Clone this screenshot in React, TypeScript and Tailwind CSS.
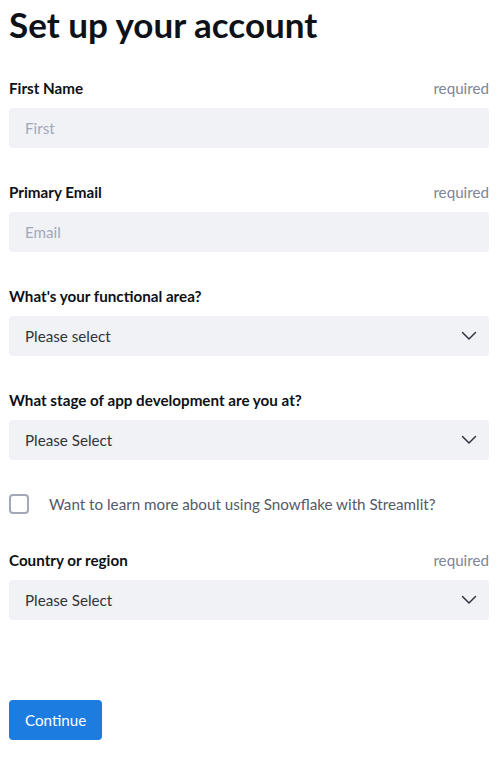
type FieldProps = {
  label: string;
  required?: boolean;
  children: React.ReactNode;
};

const Field = ({ label, required, children }: FieldProps) => (
  <div className="flex flex-col gap-2">
    <div className="flex h-6 items-center justify-between">
      <span className="text-[15.2px] font-bold text-[#0e1117]">{label}</span>
      {required && <span className="text-[15.2px] text-[#808495]">required</span>}
    </div>
    {children}
  </div>
);

const TextInput = ({ placeholder }: { placeholder: string }) => (
  <input
    className="h-10 w-full rounded bg-[#f0f2f6] px-4 text-[15.2px] text-[#31333f] outline-none placeholder:text-[#a3a8b8]"
    placeholder={placeholder}
  />
);

const Select = ({ value }: { value: string }) => (
  <div className="flex h-10 w-full items-center justify-between rounded bg-[#f0f2f6] pl-4 pr-[12px]">
    <span className="text-[15.2px] text-[#31333f]">{value}</span>
    {/* chevron */}
    <svg width="16" height="10" viewBox="0 0 16 10" fill="none" className="text-[#31333f]">
      <path d="M1.5 1.5 L8 8 L14.5 1.5" stroke="currentColor" strokeWidth="1.5" strokeLinecap="round" strokeLinejoin="round" />
    </svg>
  </div>
);

const App = () => {
  return (
    <div className="min-h-screen bg-white pl-[9px] pr-[15px] font-['Lato',sans-serif]">
      <h1 className="h-[52px] text-[35px] font-bold leading-[48px] text-[#0e1117]">Set up your account</h1>
      <div className="mt-6 flex flex-col gap-8">
        <Field label="First Name" required>
          <TextInput placeholder="First" />
        </Field>
        <Field label="Primary Email" required>
          <TextInput placeholder="Email" />
        </Field>
        <Field label="What's your functional area?">
          <Select value="Please select" />
        </Field>
        <Field label="What stage of app development are you at?">
          <Select value="Please Select" />
        </Field>
      </div>
      <label className="mt-[24px] flex h-[40px] items-center gap-5">
        <span className="h-5 w-5 shrink-0 rounded border-2 border-[#a3a8b8] bg-white" />
        <span className="text-[15.2px] text-[#555867]">Want to learn more about using Snowflake with Streamlit?</span>
      </label>
      <div className="mt-6">
        <Field label="Country or region" required>
          <Select value="Please Select" />
        </Field>
      </div>
      <button className="mt-20 h-10 rounded bg-[#1c7ce0] px-4 text-[15.2px] text-white">Continue</button>
    </div>
  );
};

export default App;
